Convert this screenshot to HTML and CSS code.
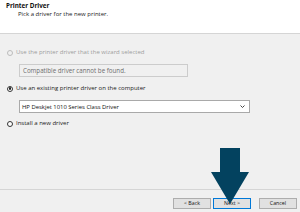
FILE: index.html
```html
<!DOCTYPE html>
<html>
<head>
<meta charset="utf-8">
<link rel="stylesheet" href="styles.css">
</head>
<body>
<div class="wizard">
  <div class="header">
    <div class="title">Printer Driver</div>
    <div class="subtitle">Pick a driver for the new printer.</div>
  </div>
  <div class="content">
    <div class="option disabled first">
      <span class="radio"></span>
      <span class="label">Use the printer driver that the wizard selected</span>
    </div>
    <div class="textbox">Compatible driver cannot be found.</div>
    <div class="option">
      <span class="radio checked"></span>
      <span class="label">Use an existing printer driver on the computer</span>
    </div>
    <div class="select">
      <span class="select-text">HP Deskjet 1010 Series Class Driver</span>
      <svg class="chevron" width="5" height="3" viewBox="0 0 5 3"><polyline points="0.5,0.5 2.5,2.5 4.5,0.5" fill="none" stroke="#444" stroke-width="1"/></svg>
    </div>
    <div class="option third">
      <span class="radio"></span>
      <span class="label">Install a new driver</span>
    </div>
  </div>
  <div class="footer">
    <button class="btn">&lt; Back</button>
    <button class="btn default">Next &gt;</button>
    <button class="btn cancel">Cancel</button>
  </div>
  <svg class="arrow" width="40" height="57" viewBox="0 0 40 57">
    <polygon points="10,0 30,0 30,24 39,24 20,56 1,24 10,24" fill="#03425f"/>
  </svg>
</div>
</body>
</html>
```

FILE: styles.css
```css
html, body {
  margin: 0;
  padding: 0;
}
body {
  width: 300px;
  height: 212px;
  overflow: hidden;
  font-family: "Open Sans", "Noto Sans", sans-serif;
  color: #000;
}
.wizard {
  position: relative;
  width: 300px;
  height: 212px;
  background: #f0f0f0;
  display: flex;
  flex-direction: column;
}
.header {
  height: 34px;
  box-sizing: border-box;
  background: #fff;
  border-bottom: 1px solid #d5d5d5;
  padding: 2px 0 0 6px;
}
.title {
  font-weight: bold;
  font-size: 6.3px;
  line-height: 8px;
  color: #111;
}
.subtitle {
  margin-left: 12px;
  font-size: 6px;
  line-height: 8px;
  color: #222;
}
.content {
  flex: 1;
  display: flex;
  flex-direction: column;
  align-items: flex-start;
  padding-left: 7px;
}
.option {
  display: flex;
  align-items: center;
  height: 9px;
  margin-top: 7px;
  font-size: 6px;
  line-height: 9px;
  color: #1a1a1a;
}
.option.first { margin-top: 14px; }
.option.third { margin-top: 6px; }
.radio {
  width: 6px;
  height: 6px;
  box-sizing: border-box;
  border: 1px solid #333;
  border-radius: 50%;
  background: #fff;
  margin-right: 3px;
  display: flex;
  align-items: center;
  justify-content: center;
}
.radio.checked::after {
  content: "";
  width: 2.4px;
  height: 2.4px;
  border-radius: 50%;
  background: #222;
}
.option.disabled { color: #9d9d9d; }
.disabled .radio { border-color: #bcbcbc; background: #f0f0f0; }
.textbox {
  margin-top: 7px;
  margin-left: 12px;
  width: 169px;
  height: 13px;
  box-sizing: border-box;
  border: 1px solid #cccccc;
  background: #f0f0f0;
  color: #6d6d6d;
  font-size: 6.2px;
  line-height: 11px;
  padding-left: 3px;
}
.select {
  margin-top: 7px;
  margin-left: 12px;
  width: 231px;
  height: 13px;
  box-sizing: border-box;
  border: 1px solid #a9a9a9;
  background: #fff;
  display: flex;
  align-items: center;
  justify-content: space-between;
  padding: 0 4px 0 2px;
  font-size: 5.9px;
  color: #111;
}
.chevron { display: block; }
.footer {
  height: 23px;
  box-sizing: border-box;
  border-top: 1px solid #d5d5d5;
  display: flex;
  justify-content: flex-end;
  align-items: flex-start;
  padding: 8px 3px 0 0;
}
.btn {
  width: 38px;
  height: 11px;
  box-sizing: border-box;
  margin: 0 0 0 2px;
  padding: 0;
  border: 1px solid #adadad;
  background: #e1e1e1;
  font-family: "Open Sans", "Noto Sans", sans-serif;
  font-size: 5.3px;
  line-height: 9px;
  color: #111;
}
.btn.default { border-color: #0078d7; }
.btn.cancel { margin-left: 8px; }
.arrow {
  position: absolute;
  left: 210px;
  top: 148px;
}
```
